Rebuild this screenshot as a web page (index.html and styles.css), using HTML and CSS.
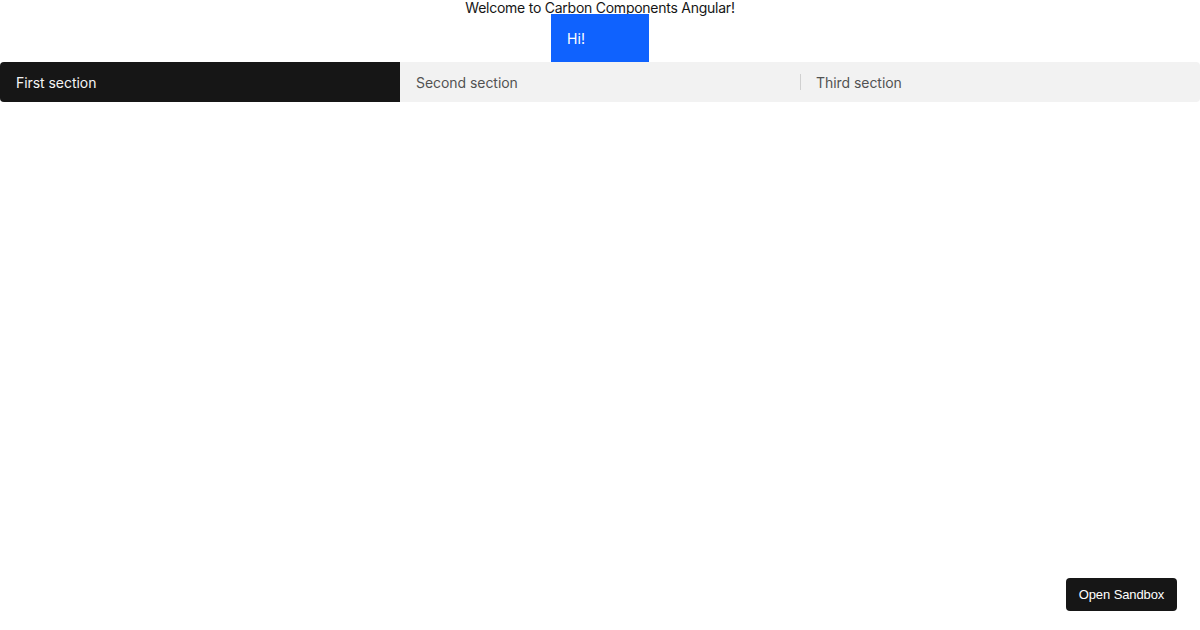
FILE: index.html
```html
<!DOCTYPE html>
<html lang="en">
<head>
  <meta charset="UTF-8">
  <meta name="viewport" content="width=device-width, initial-scale=1.0">
  <title>Carbon Components Angular</title>
  <link rel="stylesheet" href="styles.css">
</head>
<body>
  <div class="app">
    <h1 class="welcome">Welcome to Carbon Components Angular!</h1>
    <button class="cds-btn">Hi!</button>

    <div class="tabs" role="tablist">
      <button class="tab selected" role="tab">First section</button>
      <button class="tab" role="tab">Second section</button>
      <button class="tab" role="tab">Third section</button>
    </div>
  </div>

  <a class="sandbox-btn" href="#">Open Sandbox</a>
</body>
</html>
```

FILE: styles.css
```css
* {
  box-sizing: border-box;
  margin: 0;
  padding: 0;
}

body {
  font-family: Inter, "Noto Sans", sans-serif;
  color: #161616;
  background: #fff;
  width: 1200px;
  height: 630px;
  overflow: hidden;
  position: relative;
}

.app {
  display: flex;
  flex-direction: column;
  align-items: center;
}

.welcome {
  font-size: 14px;
  font-weight: 400;
  line-height: 15px;
  margin-bottom: -1px;
  letter-spacing: -0.25px;
}

.cds-btn {
  width: 98px;
  height: 48px;
  background: #0f62fe;
  color: #fff;
  border: none;
  font-family: inherit;
  font-size: 14px;
  letter-spacing: 0.16px;
  text-align: left;
  padding: 0 16px;
  cursor: pointer;
}

.tabs {
  display: flex;
  width: 100%;
  height: 40px;
  background: #f2f2f2;
  border-radius: 4px;
  overflow: hidden;
}

.tab {
  flex: 1;
  display: flex;
  align-items: center;
  position: relative;
  background: transparent;
  border: none;
  font-family: inherit;
  font-size: 14px;
  letter-spacing: -0.05px;
  color: #525252;
  text-align: left;
  padding: 0 16px;
  cursor: pointer;
}

/* thin divider between neighbouring unselected tabs */
.tab + .tab:not(.selected)::before {
  content: "";
  position: absolute;
  left: 0;
  top: 12px;
  width: 1px;
  height: 16px;
  background: #d0d0d0;
}

.tab.selected + .tab::before {
  display: none;
}

.tab.selected {
  background: #161616;
  color: #f4f4f4;
}

.sandbox-btn {
  position: absolute;
  right: 23px;
  bottom: 19px;
  width: 111px;
  height: 33px;
  background: #161616;
  color: #fff;
  border-radius: 4px;
  font-family: "Liberation Sans", Arial, sans-serif;
  font-size: 13px;
  letter-spacing: -0.1px;
  text-decoration: none;
  display: flex;
  align-items: center;
  justify-content: center;
}
```
